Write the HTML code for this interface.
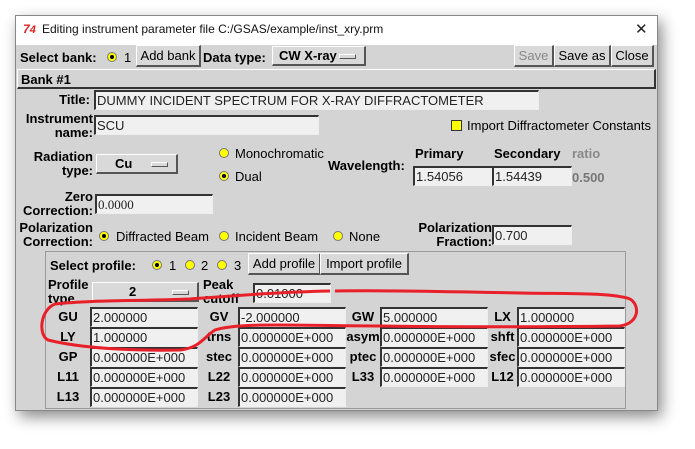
<!DOCTYPE html>
<html><head><meta charset="utf-8"><style>
*{margin:0;padding:0;box-sizing:border-box}
body{width:695px;height:449px;background:#fff;position:relative;overflow:hidden;font-family:"Liberation Sans",sans-serif;font-size:13px;color:#000}
.a{position:absolute;white-space:nowrap}
.win{position:absolute;left:15px;top:15px;width:643px;height:396px;background:#d4d4d4;border:1px solid #888;box-shadow:4px 6px 14px rgba(0,0,0,.45)}
.tb{position:absolute;left:15px;top:15px;width:643px;height:30px;background:#fff;border:1px solid #888;border-bottom:none}
.b{font-weight:bold}
.e{position:absolute;height:20px;background:#f0f0f0;border-top:2px solid #333;border-left:2px solid #333;border-right:1px solid #eee;border-bottom:1px solid #eee;padding-left:1px;line-height:17px;white-space:nowrap;overflow:hidden;color:#222}
.btn{position:absolute;height:22px;background:#d9d9d9;border-top:1px solid #fff;border-left:1px solid #fff;border-right:2px solid #555;border-bottom:2px solid #555;text-align:center;line-height:19px;white-space:nowrap}
.dd{position:absolute;height:20px;background:#d9d9d9;border-top:1px solid #fff;border-left:1px solid #fff;border-right:2px solid #555;border-bottom:2px solid #555;font-weight:bold;line-height:17px;white-space:nowrap}
.dd i{position:absolute;right:8px;top:7px;width:17px;height:5px;border-top:1px solid #fff;border-left:1px solid #fff;border-right:1px solid #555;border-bottom:1px solid #555}
.r{position:absolute;width:10px;height:10px;border-radius:50%;background:#ffff00;border:1px solid #777}
.r.s:after{content:"";position:absolute;left:2px;top:2px;width:4px;height:4px;border-radius:50%;background:#000}
.lb{position:absolute;font-weight:bold;text-align:right;line-height:14px}
.gl{position:absolute;font-weight:bold;text-align:center;line-height:20px}
</style></head><body>
<div class="win"></div>
<div class="tb"></div>
<div class="a" style="left:23px;top:22px;color:#e02020;font-weight:bold;font-style:italic;font-size:12px">7<span style="font-size:11px">4</span></div>
<div class="a" style="left:42px;top:22px;font-size:12px;color:#111">Editing instrument parameter file C:/GSAS/example/inst_xry.prm</div>
<div class="a" style="left:635px;top:20px;font-size:15px;color:#222">✕</div>

<div class="a b" style="left:20px;top:50px">Select bank:</div>
<div class="r s" style="left:107px;top:52px"></div>
<div class="a" style="left:124px;top:50px">1</div>
<div class="btn" style="left:136px;top:45px;width:65px">Add bank</div>
<div class="a b" style="left:203px;top:50px">Data type:</div>
<div class="dd" style="left:272px;top:46px;width:94px;padding-left:6px">CW X-ray<i></i></div>
<div class="btn" style="left:514px;top:45px;width:40px;color:#888">Save</div>
<div class="btn" style="left:554px;top:45px;width:57px">Save as</div>
<div class="btn" style="left:611px;top:45px;width:43px">Close</div>
<div class="a" style="left:17px;top:69px;width:639px;height:20px;border:1px solid #333;border-top-color:#fff;border-left-color:#fff;border-right-width:2px;border-bottom-width:2px"></div>
<div class="a b" style="left:21px;top:72px">Bank #1</div>

<div class="lb" style="left:40px;top:93px;width:50px">Title:</div>
<div class="e" style="left:94px;top:90px;width:445px">DUMMY INCIDENT SPECTRUM FOR X-RAY DIFFRACTOMETER</div>
<div class="lb" style="left:18px;top:112px;width:75px">Instrument<br>name:</div>
<div class="e" style="left:94px;top:115px;width:225px">SCU</div>
<div class="a" style="left:451px;top:120px;width:11px;height:11px;background:#ffff00;border:1px solid #333"></div>
<div class="a" style="left:467px;top:118px">Import Diffractometer Constants</div>

<div class="lb" style="left:18px;top:150px;width:75px">Radiation<br>type:</div>
<div class="dd" style="left:96px;top:154px;width:82px;padding-left:18px">Cu<i></i></div>
<div class="r" style="left:219px;top:148px"></div>
<div class="a" style="left:235px;top:146px">Monochromatic</div>
<div class="r s" style="left:219px;top:171px"></div>
<div class="a" style="left:235px;top:169px">Dual</div>
<div class="a b" style="left:328px;top:158px">Wavelength:</div>
<div class="a b" style="left:415px;top:146px">Primary</div>
<div class="a b" style="left:494px;top:146px">Secondary</div>
<div class="a b" style="left:572px;top:146px;color:#888">ratio</div>
<div class="e" style="left:413px;top:166px;width:80px">1.54056</div>
<div class="e" style="left:492px;top:166px;width:80px">1.54439</div>
<div class="a b" style="left:572px;top:170px;color:#777">0.500</div>

<div class="lb" style="left:18px;top:190px;width:75px">Zero<br>Correction:</div>
<div class="e" style="left:95px;top:194px;width:118px;font-family:'Liberation Serif',serif">0.0000</div>
<div class="lb" style="left:10px;top:221px;width:83px">Polarization<br>Correction:</div>
<div class="r s" style="left:99px;top:231px"></div>
<div class="a" style="left:116px;top:229px">Diffracted Beam</div>
<div class="r" style="left:219px;top:231px"></div>
<div class="a" style="left:235px;top:229px">Incident Beam</div>
<div class="r" style="left:333px;top:231px"></div>
<div class="a" style="left:349px;top:229px">None</div>
<div class="lb" style="left:410px;top:221px;width:82px">Polarization<br>Fraction:</div>
<div class="e" style="left:492px;top:225px;width:80px">0.700</div>

<div class="a" style="left:45px;top:251px;width:581px;height:158px;border:1px solid #999"></div>
<div class="a b" style="left:50px;top:258px">Select profile:</div>
<div class="r s" style="left:152px;top:260px"></div><div class="a" style="left:169px;top:258px">1</div>
<div class="r" style="left:185px;top:260px"></div><div class="a" style="left:201px;top:258px">2</div>
<div class="r" style="left:217px;top:260px"></div><div class="a" style="left:234px;top:258px">3</div>
<div class="btn" style="left:248px;top:253px;width:73px">Add profile</div>
<div class="btn" style="left:320px;top:253px;width:89px">Import profile</div>
<div class="lb" style="left:48px;top:278px;width:42px;text-align:left">Profile<br>type</div>
<div class="dd" style="left:92px;top:282px;width:107px;padding-left:36px">2<i></i></div>
<div class="lb" style="left:203px;top:278px;text-align:left">Peak<br>cutoff</div>
<div class="e" style="left:253px;top:283px;width:78px">0.01000</div>

<div class="gl" style="left:48px;top:307px;width:40px">GU</div><div class="e" style="left:90px;top:307px;width:108px">2.000000</div>
<div class="gl" style="left:200px;top:307px;width:38px">GV</div><div class="e" style="left:238px;top:307px;width:108px">-2.000000</div>
<div class="gl" style="left:346px;top:307px;width:34px">GW</div><div class="e" style="left:380px;top:307px;width:108px">5.000000</div>
<div class="gl" style="left:488px;top:307px;width:29px">LX</div><div class="e" style="left:517px;top:307px;width:108px">1.000000</div>

<div class="gl" style="left:48px;top:327px;width:40px">LY</div><div class="e" style="left:90px;top:327px;width:108px">1.000000</div>
<div class="gl" style="left:200px;top:327px;width:38px">trns</div><div class="e" style="left:238px;top:327px;width:108px">0.000000E+000</div>
<div class="gl" style="left:346px;top:327px;width:34px">asym</div><div class="e" style="left:380px;top:327px;width:108px">0.000000E+000</div>
<div class="gl" style="left:488px;top:327px;width:29px">shft</div><div class="e" style="left:517px;top:327px;width:108px">0.000000E+000</div>

<div class="gl" style="left:48px;top:347px;width:40px">GP</div><div class="e" style="left:90px;top:347px;width:108px">0.000000E+000</div>
<div class="gl" style="left:200px;top:347px;width:38px">stec</div><div class="e" style="left:238px;top:347px;width:108px">0.000000E+000</div>
<div class="gl" style="left:346px;top:347px;width:34px">ptec</div><div class="e" style="left:380px;top:347px;width:108px">0.000000E+000</div>
<div class="gl" style="left:488px;top:347px;width:29px">sfec</div><div class="e" style="left:517px;top:347px;width:108px">0.000000E+000</div>

<div class="gl" style="left:48px;top:367px;width:40px">L11</div><div class="e" style="left:90px;top:367px;width:108px">0.000000E+000</div>
<div class="gl" style="left:200px;top:367px;width:38px">L22</div><div class="e" style="left:238px;top:367px;width:108px">0.000000E+000</div>
<div class="gl" style="left:346px;top:367px;width:34px">L33</div><div class="e" style="left:380px;top:367px;width:108px">0.000000E+000</div>
<div class="gl" style="left:488px;top:367px;width:29px">L12</div><div class="e" style="left:517px;top:367px;width:108px">0.000000E+000</div>

<div class="gl" style="left:48px;top:387px;width:40px">L13</div><div class="e" style="left:90px;top:387px;width:108px">0.000000E+000</div>
<div class="gl" style="left:200px;top:387px;width:38px">L23</div><div class="e" style="left:238px;top:387px;width:108px">0.000000E+000</div>

<svg class="a" style="left:0;top:0" width="695" height="449">
<path d="M330 291 C280 292 230 296 190 299 C140 301 90 300 55 304 C40 310 38 335 48 340 C80 348 130 351 180 350 C200 348 205 336 215 330 C240 322 300 326 380 326 C450 327 540 327 620 326 C640 323 640 305 630 299 C610 292 560 294 520 293 C460 292 400 290 335 291" fill="none" stroke="#e8202a" stroke-width="3"/>
</svg>
</body></html>
